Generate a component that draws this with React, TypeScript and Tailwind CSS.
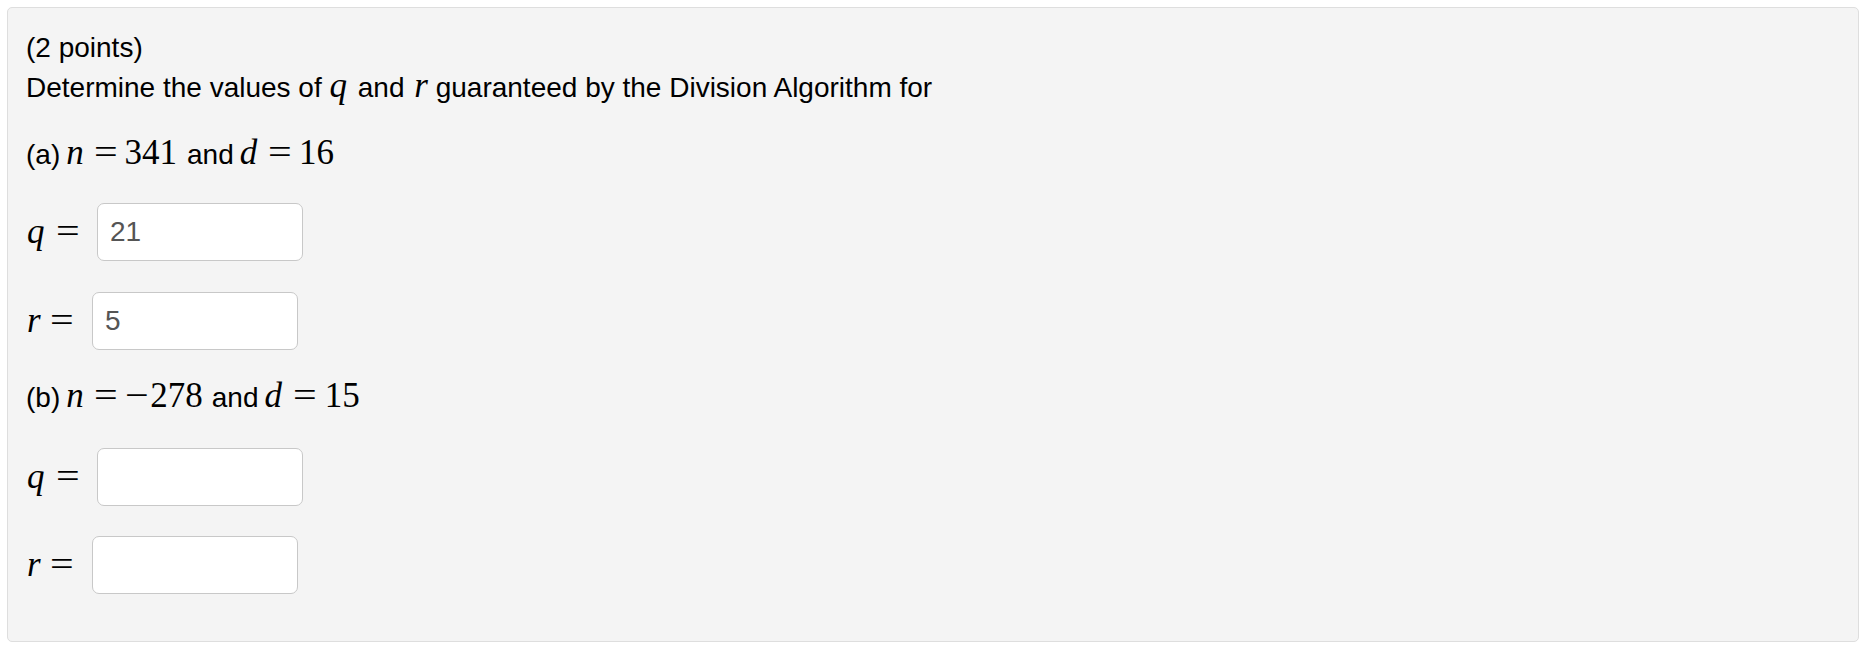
import React from 'react';

// Math tokens are set in a serif face, larger than the body text
function V({ children, className = '' }: { children: React.ReactNode; className?: string }) {
  return (
    <span className={`font-['Liberation_Serif',serif] text-[35px] italic leading-[20px] ${className}`}>
      {children}
    </span>
  );
}

function N({ children, className = '' }: { children: React.ReactNode; className?: string }) {
  return (
    <span className={`font-['Liberation_Serif',serif] text-[35px] leading-[20px] ${className}`}>
      {children}
    </span>
  );
}

// TeX's = and − are wider than the serif font's, so stretch them a bit
function Op({ sym, className = '' }: { sym: string; className?: string }) {
  return (
    <span
      className={`inline-block scale-x-[1.2] font-['Liberation_Serif',serif] text-[35px] leading-[20px] ${className}`}
    >
      {sym}
    </span>
  );
}

function AnswerRow({
  name,
  value,
  labelWidth,
  eqMargin,
  className = '',
}: {
  name: string;
  value: string;
  labelWidth: string;
  eqMargin: string;
  className?: string;
}) {
  return (
    <div className={`flex h-[58px] items-center ${className}`}>
      <div className={`flex items-baseline ${labelWidth}`}>
        <V className="ml-[1px]">{name}</V>
        <Op sym="=" className={eqMargin} />
      </div>
      <input
        readOnly
        value={value}
        className="h-[58px] w-[206px] rounded-[7px] border border-[#c8c8c8] bg-white pl-[12px] font-['Liberation_Sans',Arial,sans-serif] text-[28px] text-[#555] outline-none"
      />
    </div>
  );
}

export default function App() {
  return (
    <div className="min-h-screen bg-white pl-[7px] pr-[1px] pt-[7px] font-['Liberation_Sans',Arial,sans-serif] text-black">
      <div className="rounded-[5px] border border-[#dedede] bg-[#f4f4f4] pb-[47px] pl-[18px] pt-[20px]">
        <div className="h-[40px] text-[28px] leading-[40px]">(2 points)</div>
        <div className="h-[40px] text-[28px] leading-[40px]">
          Determine the values of <V className="mr-[3px]">q</V> and <V className="ml-[2px]">r</V> guaranteed by
          the Division Algorithm for
        </div>

        {/* part (a) */}
        <div className="mt-[27px] flex h-[40px] items-baseline text-[28px] leading-[40px]">
          <span>(a)</span>
          <V className="ml-[6px]">n</V>
          <Op sym="=" className="ml-[12px]" />
          <N className="ml-[9px]">341</N>
          <span className="ml-[10px]">and</span>
          <V className="ml-[6px]">d</V>
          <Op sym="=" className="ml-[13px]" />
          <N className="ml-[9px]">16</N>
        </div>
        <AnswerRow name="q" value="21" labelWidth="w-[71px]" eqMargin="ml-[13px]" className="mt-[28px]" />
        <AnswerRow name="r" value="5" labelWidth="w-[66px]" eqMargin="ml-[11px]" className="mt-[31px]" />

        {/* part (b) */}
        <div className="mt-[28px] flex h-[40px] items-baseline text-[28px] leading-[40px]">
          <span>(b)</span>
          <V className="ml-[6px]">n</V>
          <Op sym="=" className="ml-[12px]" />
          <Op sym="−" className="ml-[12px] mr-[3px]" />
          <N>278</N>
          <span className="ml-[9px]">and</span>
          <V className="ml-[6px]">d</V>
          <Op sym="=" className="ml-[13px]" />
          <N className="ml-[10px]">15</N>
        </div>
        <AnswerRow name="q" value="" labelWidth="w-[71px]" eqMargin="ml-[13px]" className="mt-[30px]" />
        <AnswerRow name="r" value="" labelWidth="w-[66px]" eqMargin="ml-[11px]" className="mt-[30px]" />
      </div>
    </div>
  );
}
